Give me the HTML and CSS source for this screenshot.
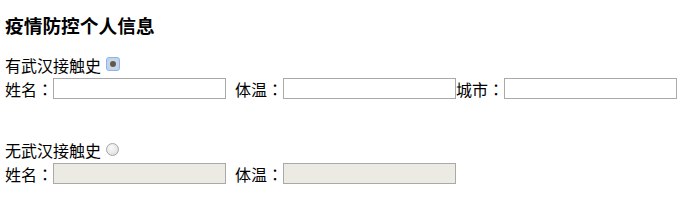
FILE: index.html
```html
<!DOCTYPE html>
<html lang="zh-CN">
<head>
<meta charset="utf-8">
<title>疫情防控个人信息</title>
<link rel="stylesheet" href="styles.css">
</head>
<body>
<h3 class="title">疫情防控个人信息</h3>
<div class="choice">
  <span>有武汉接触史</span>
  <span class="radio checked" role="radio" aria-checked="true"><span class="dot"></span></span>
</div>
<div class="fields">
  <span class="label">姓名<span class="colon" lang="zh-TW">：</span></span>
  <input class="field" type="text">
  <span class="label gap">体温<span class="colon" lang="zh-TW">：</span></span>
  <input class="field" type="text">
  <span class="label">城市<span class="colon" lang="zh-TW">：</span></span>
  <input class="field" type="text">
</div>
<div class="choice second">
  <span>无武汉接触史</span>
  <span class="radio" role="radio" aria-checked="false"></span>
</div>
<div class="fields">
  <span class="label">姓名<span class="colon" lang="zh-TW">：</span></span>
  <input class="field" type="text" disabled>
  <span class="label gap">体温<span class="colon" lang="zh-TW">：</span></span>
  <input class="field" type="text" disabled>
</div>
</body>
</html>
```
FILE: styles.css
```css
html, body {
  margin: 0;
  padding: 0;
  background: #ffffff;
}
body {
  padding: 0 5px;
  font-family: "Noto Sans CJK SC", "Noto Sans", sans-serif;
  font-size: 16px;
  color: #000000;
}
.title {
  margin: 12px 0 0 0;
  height: 26px;
  line-height: 26px;
  font-size: 18.72px;
  font-weight: bold;
}
.choice {
  margin-top: 16px;
  height: 22px;
  display: flex;
  align-items: center;
  line-height: 22px;
}
.choice.second {
  margin-top: 38px;
}
.fields {
  height: 25px;
  display: flex;
  align-items: center;
  line-height: 22px;
}
.label {
  white-space: nowrap;
}
.label.gap {
  margin-left: 9px;
}
.colon {
  font-family: "Noto Sans CJK TC", "Noto Sans CJK SC", sans-serif;
}
.field {
  box-sizing: border-box;
  width: 173px;
  height: 21px;
  margin: 0;
  padding: 1px 2px;
  border: 1px solid #a9a9a9;
  background: #ffffff;
  font: inherit;
  outline: none;
}
.field:disabled {
  background: #ebebe4;
}
.radio {
  box-sizing: border-box;
  width: 13px;
  height: 13px;
  margin: -1px 0 0 5px;
  border: 1px solid #a6a6a6;
  border-radius: 50%;
  background: radial-gradient(circle at 40% 35%, #fafafa 0%, #e6e6e6 60%, #d2d2d2 100%);
  display: flex;
  align-items: center;
  justify-content: center;
}
.radio.checked {
  width: 14px;
  height: 14px;
  margin-top: -2px;
  border-radius: 3px;
  border: 1px solid #8fb4ea;
  background: #bcd4f6;
}
.radio.checked .dot {
  box-sizing: border-box;
  width: 10px;
  height: 10px;
  border-radius: 50%;
  border: 2px solid #d4d4d4;
  background: #5a5a5a;
}
```
